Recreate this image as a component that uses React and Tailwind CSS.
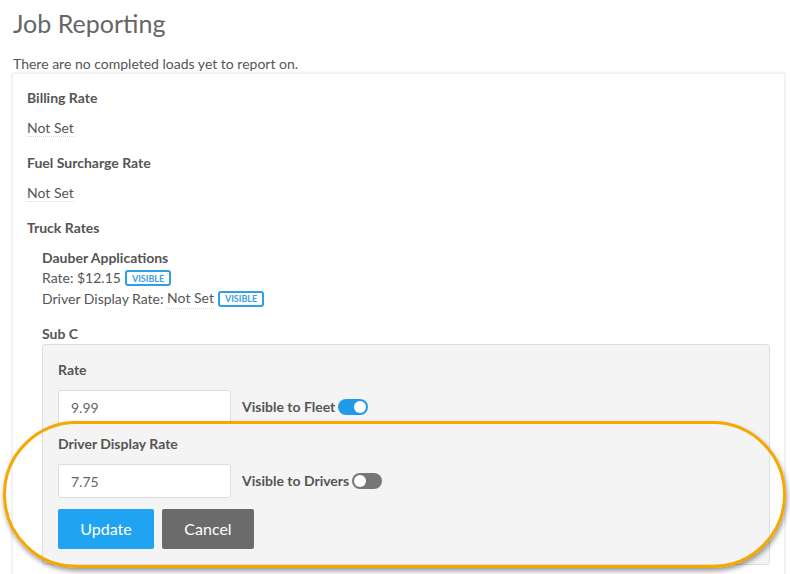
import React from "react";

const Toggle = ({ on }) => (
  <span
    className={
      "inline-flex items-center w-[30px] h-[16px] rounded-full px-[2px] " +
      (on ? "bg-[#1f9bea] justify-end" : "bg-[#777777] justify-start")
    }
  >
    <span className="block w-[12px] h-[12px] rounded-full bg-white" />
  </span>
);

const Badge = () => (
  <span className="inline-flex items-center h-[16px] px-[5px] ml-[4px] border-2 border-[#2f9fe4] rounded-[3px] text-[9px] font-bold text-[#3a9fde] leading-none align-middle">
    VISIBLE
  </span>
);

const NotSet = () => (
  <span className="border-b border-dotted border-[#d5d5d5]">Not Set</span>
);

const App = () => {
  return (
    <div
      className="relative min-h-[574px] bg-white px-[13px] text-[14px] text-[#555555] overflow-hidden"
      style={{ fontFamily: "Lato, 'Open Sans', sans-serif" }}
    >
      <h1 className="pt-[8px] text-[25px] leading-[30px] text-[#666666]">Job Reporting</h1>
      <p className="mt-[17px] leading-[18px]">There are no completed loads yet to report on.</p>

      <div className="-ml-[1px] mr-[-8px] border border-[#f0f0f0] shadow-[0_0_3px_rgba(0,0,0,0.10)] px-[14px] pt-[14px] pb-[15px] leading-[20px]">
        <div className="font-bold">Billing Rate</div>
        <div className="mt-[10px]">
          <NotSet />
        </div>

        <div className="mt-[15px] font-bold">Fuel Surcharge Rate</div>
        <div className="mt-[10px]">
          <NotSet />
        </div>

        <div className="mt-[15px] font-bold">Truck Rates</div>

        <div className="pl-[15px]">
          <div className="mt-[10px] font-bold">Dauber Applications</div>
          <div className="flex items-center">
            Rate: $12.15
            <Badge />
          </div>
          <div className="flex items-center">
            Driver Display Rate:&nbsp;
            <NotSet />
            <Badge />
          </div>

          <div className="mt-[15px] font-bold">Sub C</div>

          <div className="border border-[#dddddd] rounded-[3px] bg-[#f4f4f4] px-[15px] pt-[15px] pb-[15px]">
            <div className="font-bold">Rate</div>
            <div className="mt-[10px] flex items-center">
              <input
                readOnly
                value="9.99"
                className="w-[173px] h-[34px] bg-white border border-[#dddddd] rounded-[2px] px-[12px] text-[14px] text-[#666666] outline-none"
              />
              <span className="ml-[11px] font-bold mr-[3px]">Visible to Fleet</span>
              <Toggle on />
            </div>

            <div className="mt-[10px] font-bold">Driver Display Rate</div>
            <div className="mt-[10px] flex items-center">
              <input
                readOnly
                value="7.75"
                className="w-[173px] h-[34px] bg-white border border-[#dddddd] rounded-[2px] px-[12px] text-[14px] text-[#666666] outline-none"
              />
              <span className="ml-[11px] font-bold mr-[3px]">Visible to Drivers</span>
              <Toggle on={false} />
            </div>

            <div className="mt-[11px] flex gap-[8px]">
              <button className="w-[96px] h-[40px] rounded-[2px] bg-[#20a3f0] text-white text-[16px]">
                Update
              </button>
              <button className="w-[92px] h-[40px] rounded-[2px] bg-[#6b6b6b] text-white text-[16px]">
                Cancel
              </button>
            </div>
          </div>
        </div>
      </div>

      <div className="pointer-events-none absolute left-[3px] top-[421px] w-[783px] h-[147px] rounded-full border-[3px] border-[#f5a800] shadow-[1px_3px_5px_rgba(0,0,0,0.4)]" />
    </div>
  );
};

export default App;
